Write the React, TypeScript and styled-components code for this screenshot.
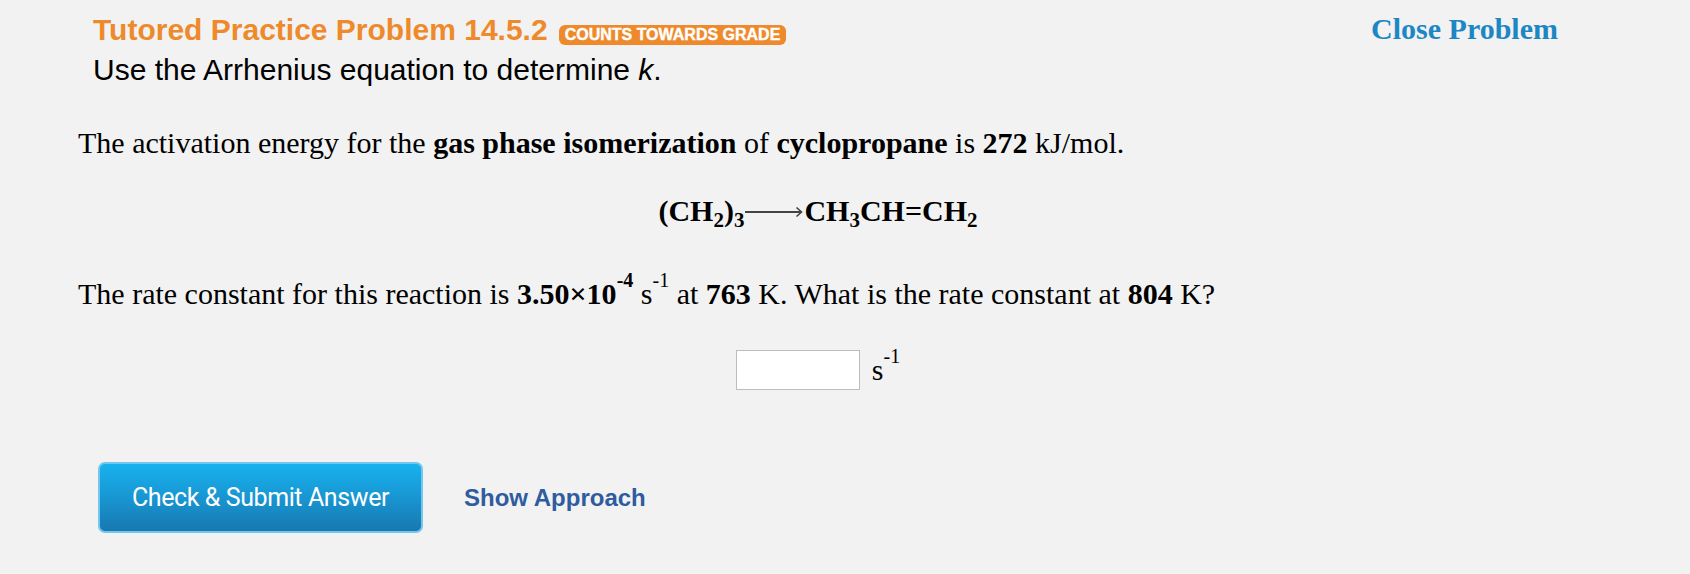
import React from 'react';
import styled, { createGlobalStyle } from 'styled-components';

const GlobalStyle = createGlobalStyle`
  html, body {
    margin: 0;
    padding: 0;
    background: #f2f2f2;
  }
`;

const Page = styled.div`
  width: 1480px;
  padding: 13px 0 40px 78px;
  color: #000;
  font-family: 'Liberation Serif', 'Times New Roman', serif;
`;

const Header = styled.header`
  display: flex;
  justify-content: space-between;
  align-items: flex-start;
  padding-left: 15px;
`;

const HeadText = styled.div`
  display: flex;
  flex-direction: column;
`;

const TitleRow = styled.div`
  display: flex;
  align-items: baseline;
`;

const Title = styled.h1`
  margin: 0;
  font-family: 'Liberation Sans', Arial, sans-serif;
  font-size: 30px;
  line-height: 34px;
  font-weight: bold;
  color: #ee8a2b;
`;

const Badge = styled.span`
  display: inline-block;
  margin-left: 11px;
  padding: 0 6px;
  height: 20px;
  line-height: 20px;
  border-radius: 6px;
  background: #ee8a2b;
  color: #fff;
  font-family: 'Liberation Sans', Arial, sans-serif;
  font-size: 16px;
  font-weight: bold;
  -webkit-text-stroke: 0.4px #fff;
`;

const Subtitle = styled.p`
  margin: 6px 0 0;
  font-family: 'Liberation Sans', Arial, sans-serif;
  font-size: 30px;
  line-height: 34px;
`;

const CloseLink = styled.a`
  font-family: 'Liberation Serif', 'Times New Roman', serif;
  font-size: 30px;
  line-height: 31px;
  font-weight: bold;
  color: #1d87c4;
  text-decoration: none;
  cursor: pointer;
`;

const Para = styled.p<{ $top: number }>`
  margin: ${p => p.$top}px 0 0;
  font-size: 30px;
  line-height: 34px;
`;

const Equation = styled.div`
  margin-top: 34px;
  text-align: center;
  font-size: 30px;
  line-height: 34px;
  font-weight: bold;
`;

const Sub = styled.sub`
  font-size: 21px;
  line-height: 0;
  vertical-align: -6px;
`;

const Sup = styled.sup`
  font-size: 20px;
  line-height: 0;
  vertical-align: 17px;
`;

const Arrow = styled.svg`
  width: 58px;
  height: 12px;
  margin: 0 1px;
  vertical-align: 3px;
`;

const AnswerRow = styled.div`
  margin-top: 39px;
  display: flex;
  justify-content: center;
  align-items: flex-start;
  gap: 12px;
`;

const AnswerInput = styled.input`
  box-sizing: border-box;
  width: 124px;
  height: 40px;
  margin: 0;
  border: 1px solid #bdbdbd;
  background: #fff;
  font-size: 20px;
  padding: 0 6px;
  outline: none;
`;

const Unit = styled.span`
  margin-top: 3px;
  font-size: 30px;
  line-height: 34px;
`;

const Actions = styled.div`
  margin-top: 72px;
  padding-left: 20px;
  display: flex;
  align-items: center;
  gap: 41px;
`;

const SubmitButton = styled.button`
  box-sizing: border-box;
  width: 325px;
  height: 71px;
  border: 2px solid #74c6ed;
  border-radius: 7px;
  background: linear-gradient(to bottom, #17b2ee 0%, #1896d2 50%, #1878b0 100%);
  color: #fff;
  font-family: Roboto, 'Liberation Sans', sans-serif;
  font-size: 25px;
  letter-spacing: -0.4px;
  cursor: pointer;
`;

const ApproachLink = styled.a`
  font-family: 'Liberation Sans', Arial, sans-serif;
  font-size: 24px;
  font-weight: bold;
  color: #2e5c9e;
  text-decoration: none;
  cursor: pointer;
`;

export default function App() {
  return (
    <>
      <GlobalStyle />
      <Page>
        <Header>
          <HeadText>
            <TitleRow>
              <Title>Tutored Practice Problem 14.5.2</Title>
              <Badge>COUNTS TOWARDS GRADE</Badge>
            </TitleRow>
            <Subtitle>
              Use the Arrhenius equation to determine <i>k</i>.
            </Subtitle>
          </HeadText>
          <CloseLink>Close Problem</CloseLink>
        </Header>

        <Para $top={39}>
          The activation energy for the <b>gas phase isomerization</b> of{' '}
          <b>cyclopropane</b> is <b>272</b> kJ/mol.
        </Para>

        <Equation>
          (CH<Sub>2</Sub>)<Sub>3</Sub>
          <Arrow viewBox="0 0 58 12">
            <line x1="0" y1="6" x2="56" y2="6" stroke="#444" strokeWidth="2" />
            <path d="M51.5 1.5 L56.5 6 L51.5 10.5" fill="none" stroke="#444" strokeWidth="1.6" />
          </Arrow>
          CH<Sub>3</Sub>CH=CH<Sub>2</Sub>
        </Equation>

        <Para $top={49}>
          The rate constant for this reaction is{' '}
          <b>
            3.50×10<Sup>-4</Sup>
          </b>{' '}
          s<Sup>-1</Sup> at <b>763</b> K. What is the rate constant at <b>804</b> K?
        </Para>

        <AnswerRow>
          <AnswerInput type="text" />
          <Unit>
            s<Sup>-1</Sup>
          </Unit>
        </AnswerRow>

        <Actions>
          <SubmitButton>Check &amp; Submit Answer</SubmitButton>
          <ApproachLink>Show Approach</ApproachLink>
        </Actions>
      </Page>
    </>
  );
}
